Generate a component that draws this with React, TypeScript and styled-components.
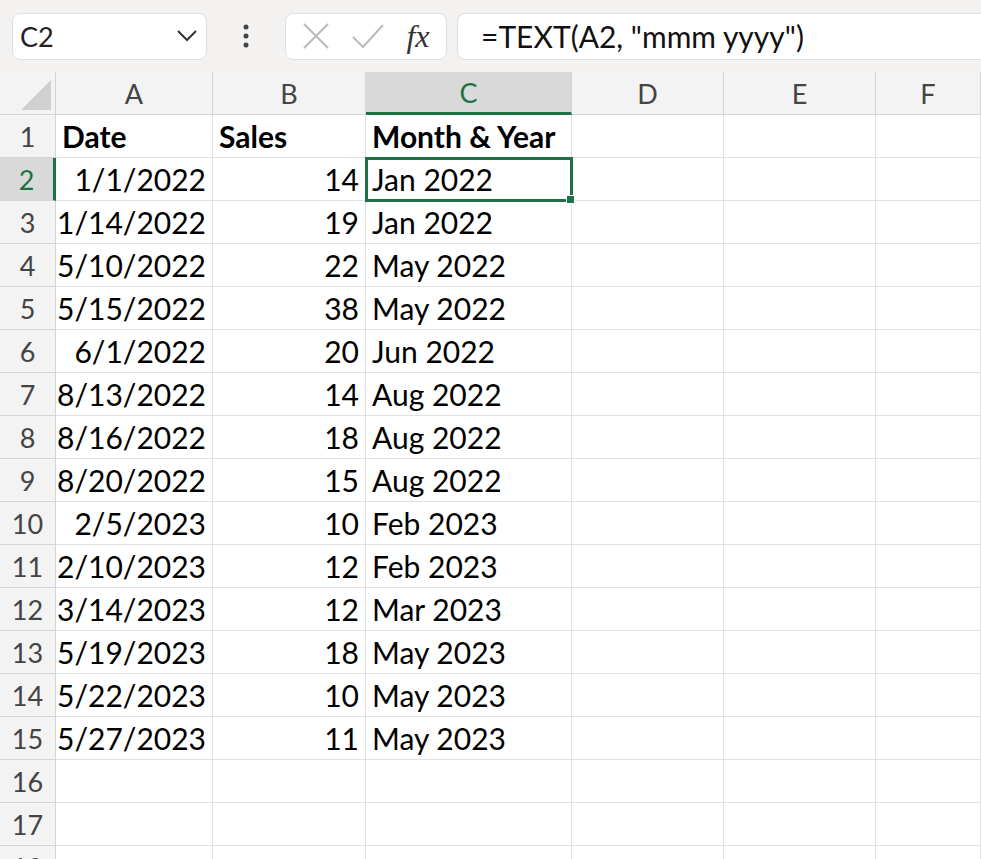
import React from "react";
import styled, { createGlobalStyle } from "styled-components";

const G = createGlobalStyle`
  body { margin: 0; font-family: Lato, "Noto Sans", sans-serif; background: #fff; overflow: hidden; }
`;
const Bar = styled.div`
  height: 72px; background: #f3f2f1; display: flex; align-items: center; padding-left: 12px; box-sizing: border-box;
`;
const NameBox = styled.div`
  width: 195px; height: 47px; background: #fff; border: 1px solid #e1dfdd; border-radius: 8px; box-sizing: border-box;
  display: flex; align-items: center; justify-content: space-between; padding: 0 8px 0 7px; font-size: 27px; color: #222;
`;
const Dots = styled.div`
  width: 78px; display: flex; justify-content: center; align-items: center;
`;
const FxBox = styled.div`
  width: 162px; height: 47px; background: #fff; border: 1px solid #e1dfdd; border-radius: 8px; box-sizing: border-box;
  display: flex; align-items: center; justify-content: space-around; padding: 0 6px;
`;
const Fx = styled.span`
  font-family: "Liberation Serif", serif; font-style: italic; font-size: 32px; color: #333;
`;
const Formula = styled.div`
  margin-left: 10px; flex: 1; height: 47px; background: #fff; border: 1px solid #e1dfdd; border-right: none;
  border-radius: 8px 0 0 8px; box-sizing: border-box; display: flex; align-items: center; padding-left: 23px; font-size: 30px; color: #111;
`;
const Grid = styled.div`
  display: grid; grid-template-columns: 56px 157px 153px 206px 152px 152px 105px; grid-auto-rows: 43px;
`;
const Head = styled.div<{ $sel?: boolean }>`
  background: ${p => (p.$sel ? "#d9d9d9" : "#f3f3f3")}; border-right: 1px solid #d4d4d4; border-bottom: ${p => (p.$sel ? "3px solid #1e7145" : "1px solid #d4d4d4")};
  box-sizing: border-box; display: flex; align-items: center; justify-content: center; font-size: 27px; color: ${p => (p.$sel ? "#1e7145" : "#444")};
`;
const RowHead = styled.div<{ $sel?: boolean }>`
  background: ${p => (p.$sel ? "#d9d9d9" : "#f3f3f3")}; border-bottom: 1px solid #d4d4d4; border-right: ${p => (p.$sel ? "3px solid #1e7145" : "1px solid #d4d4d4")};
  box-sizing: border-box; display: flex; align-items: center; justify-content: center; font-size: 27px; color: ${p => (p.$sel ? "#1e7145" : "#444")};
`;
const Corner = styled.div`
  background: #f3f3f3; border-right: 1px solid #d4d4d4; border-bottom: 1px solid #d4d4d4; position: relative;
  &::after { content: ""; position: absolute; right: 4px; bottom: 4px; border-left: 30px solid transparent; border-bottom: 30px solid #d0d0d0; }
`;
const Cell = styled.div<{ $right?: boolean; $bold?: boolean; $sel?: boolean }>`
  border-right: 1px solid #e1e1e1; border-bottom: 1px solid #e1e1e1; box-sizing: border-box; position: relative;
  display: flex; align-items: center; justify-content: ${p => (p.$right ? "flex-end" : "flex-start")};
  padding: 0 6px; font-size: 30px; color: #000; font-weight: ${p => (p.$bold ? 700 : 400)}; white-space: nowrap;
  ${p => p.$sel ? `outline: 3px solid #1e7145; outline-offset: -2px; z-index: 1;
    &::after { content: ""; position: absolute; right: -4px; bottom: -4px; width: 7px; height: 7px; background: #1e7145; border: 1px solid #fff; }` : ""}
`;

const data: [string, string, string][] = [
  ["1/1/2022","14","Jan 2022"],["1/14/2022","19","Jan 2022"],["5/10/2022","22","May 2022"],["5/15/2022","38","May 2022"],
  ["6/1/2022","20","Jun 2022"],["8/13/2022","14","Aug 2022"],["8/16/2022","18","Aug 2022"],["8/20/2022","15","Aug 2022"],
  ["2/5/2023","10","Feb 2023"],["2/10/2023","12","Feb 2023"],["3/14/2023","12","Mar 2023"],["5/19/2023","18","May 2023"],
  ["5/22/2023","10","May 2023"],["5/27/2023","11","May 2023"],
];

export default function App() {
  const rows: React.ReactNode[] = [];
  for (let r = 1; r <= 18; r++) {
    rows.push(<RowHead key={"h" + r} $sel={r === 2}>{r}</RowHead>);
    if (r === 1) {
      rows.push(<Cell key="a1" $bold>Date</Cell>, <Cell key="b1" $bold>Sales</Cell>, <Cell key="c1" $bold>Month &amp; Year</Cell>);
    } else if (r <= 15) {
      const d = data[r - 2];
      rows.push(<Cell key={"a" + r} $right>{d[0]}</Cell>, <Cell key={"b" + r} $right>{d[1]}</Cell>, <Cell key={"c" + r} $sel={r === 2}>{d[2]}</Cell>);
    } else {
      rows.push(<Cell key={"a" + r} />, <Cell key={"b" + r} />, <Cell key={"c" + r} />);
    }
    rows.push(<Cell key={"d" + r} />, <Cell key={"e" + r} />, <Cell key={"f" + r} />);
  }
  return (
    <>
      <G />
      <Bar>
        <NameBox>C2
          <svg width="22" height="14" viewBox="0 0 22 14"><path d="M2 2l9 9 9-9" fill="none" stroke="#333" strokeWidth="2" /></svg>
        </NameBox>
        <Dots>
          <svg width="6" height="24" viewBox="0 0 6 24"><circle cx="3" cy="3" r="2.5" fill="#444" /><circle cx="3" cy="12" r="2.5" fill="#444" /><circle cx="3" cy="21" r="2.5" fill="#444" /></svg>
        </Dots>
        <FxBox>
          <svg width="28" height="28" viewBox="0 0 28 28"><path d="M2 2l24 24M26 2L2 26" stroke="#bbb" strokeWidth="2" /></svg>
          <svg width="34" height="28" viewBox="0 0 34 28"><path d="M2 15l10 10L32 3" fill="none" stroke="#bbb" strokeWidth="2" /></svg>
          <Fx>fx</Fx>
        </FxBox>
        <Formula>=TEXT(A2, "mmm yyyy")</Formula>
      </Bar>
      <Grid>
        <Corner />
        {["A", "B", "C", "D", "E", "F"].map(c => <Head key={c} $sel={c === "C"}>{c}</Head>)}
        {rows}
      </Grid>
    </>
  );
}
